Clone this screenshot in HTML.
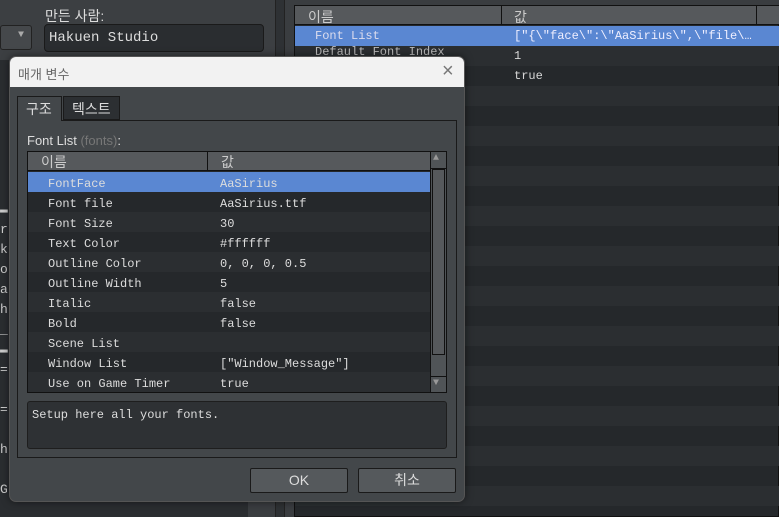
<!DOCTYPE html><html><head><meta charset="utf-8"><style>
*{box-sizing:border-box;margin:0;padding:0}
body{width:779px;height:517px;background:#3a3d40;position:relative;overflow:hidden;font-family:"Liberation Mono","Noto Sans CJK KR",monospace;font-size:12px;color:#d8d8d8}
.a{position:absolute;white-space:nowrap}
.sans{font-family:"Liberation Sans","Noto Sans CJK KR",sans-serif}
</style></head><body>
<div class="a" style="left:0;top:0;width:275px;height:517px;background:#3c3f42"></div>
<div class="a" style="left:275px;top:0;width:10px;height:517px;background:#2e3134;border-left:1px solid #222;border-right:1px solid #222"></div>
<div class="a" style="left:0;top:25px;width:32px;height:25px;background:#45484b;border:1px solid #222;border-radius:3px"></div>
<div class="a" style="left:18px;top:30px;font-size:10px;color:#aaa">▼</div>
<div class="a sans" style="left:45px;top:6px;font-size:14px;color:#ddd">만든 사람:</div>
<div class="a" style="left:44px;top:24px;width:220px;height:28px;background:#2a2d30;border:1px solid #1a1a1a;border-radius:4px;padding:5px 0 0 4px;font-size:14px;color:#ddd">Hakuen Studio</div>
<div class="a" style="left:0;top:60px;width:250px;height:457px;background:#2a2d30"></div>
<div class="a" style="left:248px;top:60px;width:27px;height:457px;background:#3a3d40"></div>
<div class="a" style="left:0;top:200px;font-size:13px;line-height:20px;color:#ccc">▬<br>r<br>k<br>o<br>a<br>h<br>_<br>▬<br>=<br><br>=<br><br>h<br><br>G</div>
<div class="a" style="left:285px;top:0;width:494px;height:517px;background:#3a3d40"></div>
<div class="a" style="left:294px;top:5px;width:485px;height:512px;background:#25282b;border:1px solid #111"></div>
<div class="a" style="left:295px;top:6px;width:484px;height:19px;background:#56595c;border-bottom:1px solid #111"></div>
<div class="a" style="left:501px;top:6px;width:1px;height:19px;background:#111"></div>
<div class="a" style="left:756px;top:6px;width:1px;height:19px;background:#111"></div>
<div class="a sans" style="left:308px;top:7px;font-size:14px;color:#ccc">이름</div>
<div class="a sans" style="left:514px;top:7px;font-size:14px;color:#ccc">값</div>
<div class="a" style="left:295px;top:26px;width:484px;height:20px;background:#5a87d2"></div>
<div class="a" style="left:315px;top:29px;color:#dde">Font List</div>
<div class="a" style="left:514px;top:29px;color:#eef">["{\"face\":\"AaSirius\",\"file\…</div>
<div class="a" style="left:295px;top:46px;width:484px;height:20px;background:#2b2e31"></div>
<div class="a" style="left:315px;top:45px;color:#bbb">Default Font Index</div>
<div class="a" style="left:514px;top:49px">1</div>
<div class="a" style="left:514px;top:69px">true</div>
<div class="a" style="left:295px;top:86px;width:484px;height:20px;background:#2b2e31"></div>
<div class="a" style="left:295px;top:126px;width:484px;height:20px;background:#2b2e31"></div>
<div class="a" style="left:295px;top:166px;width:484px;height:20px;background:#2b2e31"></div>
<div class="a" style="left:295px;top:206px;width:484px;height:20px;background:#2b2e31"></div>
<div class="a" style="left:295px;top:246px;width:484px;height:20px;background:#2b2e31"></div>
<div class="a" style="left:295px;top:286px;width:484px;height:20px;background:#2b2e31"></div>
<div class="a" style="left:295px;top:326px;width:484px;height:20px;background:#2b2e31"></div>
<div class="a" style="left:295px;top:366px;width:484px;height:20px;background:#2b2e31"></div>
<div class="a" style="left:295px;top:406px;width:484px;height:20px;background:#2b2e31"></div>
<div class="a" style="left:295px;top:446px;width:484px;height:20px;background:#2b2e31"></div>
<div class="a" style="left:295px;top:486px;width:484px;height:20px;background:#2b2e31"></div>
<div class="a" style="left:9px;top:56px;width:456px;height:446px;background:#43474a;border:1px solid #555;border-radius:7px;overflow:hidden;box-shadow:0 0 8px rgba(0,0,0,.5)">
 <div class="a" style="left:0;top:0;width:456px;height:30px;background:#f2f2f2"></div>
 <div class="a sans" style="left:8px;top:7px;font-size:13px;color:#666">매개 변수</div>
 <div class="a sans" style="left:432px;top:3px;font-size:20px;color:#777;font-weight:300">×</div>
</div>
<div class="a" style="left:17px;top:96px;width:45px;height:25px;background:#43474a;border:1px solid #1a1a1a;border-bottom:none"></div>
<div class="a sans" style="left:26px;top:99px;font-size:14px;color:#ddd">구조</div>
<div class="a" style="left:63px;top:96px;width:57px;height:24px;background:#2c2f32;border:1px solid #1a1a1a"></div>
<div class="a sans" style="left:72px;top:99px;font-size:14px;color:#ddd">텍스트</div>
<div class="a" style="left:17px;top:120px;width:440px;height:338px;border:1px solid #1a1a1a;border-top:none"></div>
<div class="a" style="left:62px;top:120px;width:395px;height:1px;background:#1a1a1a"></div>
<div class="a sans" style="left:27px;top:133px;font-size:13px;color:#ddd">Font List <span style="color:#777">(fonts)</span>:</div>
<div class="a" style="left:27px;top:151px;width:420px;height:242px;background:#25282b;border:1px solid #111"></div>
<div class="a" style="left:28px;top:152px;width:402px;height:19px;background:#56595c;border-bottom:1px solid #111"></div>
<div class="a" style="left:207px;top:152px;width:1px;height:19px;background:#111"></div>
<div class="a sans" style="left:41px;top:152px;font-size:14px;color:#ccc">이름</div>
<div class="a sans" style="left:221px;top:152px;font-size:14px;color:#ccc">값</div>
<div class="a" style="left:28px;top:172px;width:402px;height:20px;background:#5a87d2"></div>
<div class="a" style="left:28px;top:212px;width:402px;height:20px;background:#2b2e31"></div>
<div class="a" style="left:28px;top:252px;width:402px;height:20px;background:#2b2e31"></div>
<div class="a" style="left:28px;top:292px;width:402px;height:20px;background:#2b2e31"></div>
<div class="a" style="left:28px;top:332px;width:402px;height:20px;background:#2b2e31"></div>
<div class="a" style="left:28px;top:372px;width:402px;height:20px;background:#2b2e31"></div>
<div class="a" style="left:48px;top:174px;line-height:20px;color:#ddd">FontFace<br>Font file<br>Font Size<br>Text Color<br>Outline Color<br>Outline Width<br>Italic<br>Bold<br>Scene List<br>Window List<br>Use on Game Timer</div>
<div class="a" style="left:220px;top:174px;line-height:20px;color:#ddd">AaSirius<br>AaSirius.ttf<br>30<br>#ffffff<br>0, 0, 0, 0.5<br>5<br>false<br>false<br><br>["Window_Message"]<br>true</div>
<div class="a" style="left:430px;top:152px;width:16px;height:240px;background:#505457;border-left:1px solid #111"></div>
<div class="a" style="left:430px;top:168px;width:16px;height:1px;background:#111"></div>
<div class="a" style="left:430px;top:376px;width:16px;height:1px;background:#111"></div>
<div class="a" style="left:432px;top:169px;width:13px;height:186px;background:#56595c;border:1px solid #111"></div>
<div class="a" style="left:433px;top:153px;font-size:10px;color:#999">▲</div>
<div class="a" style="left:433px;top:378px;font-size:10px;color:#999">▼</div>
<div class="a" style="left:27px;top:401px;width:420px;height:48px;background:#2e3134;border:1px solid #1e1e1e;border-radius:3px;padding:6px 4px;color:#ddd">Setup here all your fonts.</div>
<div class="a sans" style="left:250px;top:468px;width:98px;height:25px;background:#55595c;border:1px solid #1a1a1a;border-radius:2px;text-align:center;line-height:23px;font-size:14px;color:#ddd">OK</div>
<div class="a sans" style="left:358px;top:468px;width:98px;height:25px;background:#55595c;border:1px solid #1a1a1a;border-radius:2px;text-align:center;line-height:23px;font-size:14px;color:#ddd">취소</div>
</body></html>
